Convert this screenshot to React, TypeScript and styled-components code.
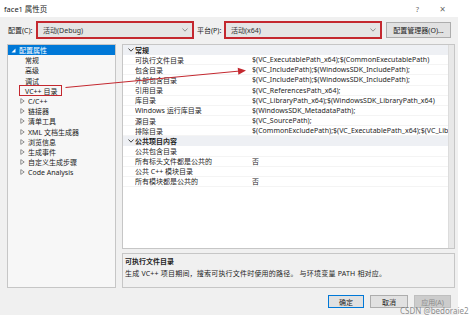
import React from "react";
import styled, { createGlobalStyle } from "styled-components";

const Global = createGlobalStyle`
  html, body { margin: 0; padding: 0; background: #ffffff; }
  body {
    font-family: "Noto Sans", "Noto Sans CJK SC", sans-serif;
    font-size: 7px;
    color: #1e1e1e;
  }
  * { box-sizing: border-box; }
`;

const Page = styled.div`
  position: relative;
  width: 474px;
  height: 318px;
`;

const Window = styled.div`
  width: 458px;
  height: 315px;
  background: #f0f0f0;
  display: flex;
  flex-direction: column;
`;

const TitleBar = styled.div`
  height: 17px;
  background: #ffffff;
  display: flex;
  align-items: center;
  padding: 0 3px 0 4px;
  font-size: 7.5px;
  color: #222;
`;

const Title = styled.div`
  flex: 1;
`;

const TitleButton = styled.div<{ $big?: boolean }>`
  width: 25px;
  text-align: center;
  color: #6a6a6a;
  font-size: ${(p) => (p.$big ? "10px" : "7.5px")};
`;

const ConfigRow = styled.div`
  height: 26px;
  display: flex;
  align-items: center;
  padding-left: 8px;
`;

const FieldLabel = styled.span<{ $w: number; $ml?: number }>`
  width: ${(p) => p.$w}px;
  margin-left: ${(p) => p.$ml ?? 0}px;
  color: #222;
`;

const Select = styled.div`
  width: 158px;
  height: 18px;
  border: 2px solid #c4282f;
  background: #e5e5e5;
  display: flex;
  align-items: center;
  justify-content: space-between;
  padding: 0 4px 0 5px;
  color: #333;
`;

const Spacer = styled.span<{ $w: number }>`
  width: ${(p) => p.$w}px;
  flex: none;
`;

const Button = styled.div<{ $w: number; $variant?: "default" | "primary" | "disabled" }>`
  width: ${(p) => p.$w}px;
  height: ${(p) => (p.$variant ? 13 : 16)}px;
  border: 1px solid
    ${(p) =>
      p.$variant === "primary" ? "#0078d7" : p.$variant === "disabled" ? "#bfbfbf" : "#adadad"};
  background: ${(p) => (p.$variant === "disabled" ? "#cccccc" : "#e1e1e1")};
  color: ${(p) => (p.$variant === "disabled" ? "#8a8a8a" : "#222")};
  display: flex;
  align-items: center;
  justify-content: center;
  white-space: nowrap;
`;

const Main = styled.div`
  height: 245px;
  display: flex;
  gap: 6px;
  padding: 1px 3px 0 7px;
`;

const Tree = styled.div`
  width: 109px;
  height: 244px;
  border: 1px solid #c6c6c6;
  background: #f7f7f7;
  display: flex;
  flex-direction: column;
`;

const TreeRow = styled.div<{ $level: number; $selected?: boolean }>`
  height: 10.2px;
  flex: none;
  display: flex;
  align-items: center;
  padding-left: ${(p) => (p.$level === 0 ? 3 : p.$level === 1 ? 17 : 12)}px;
  background: ${(p) => (p.$selected ? "#0078d7" : "transparent")};
  color: ${(p) => (p.$selected ? "#ffffff" : "#222")};
  white-space: nowrap;
`;

const Expander = styled.span`
  width: 6px;
  display: inline-flex;
  align-items: center;
  margin-right: 2px;
`;

const TreeLabel = styled.span<{ $marked?: boolean }>`
  ${(p) =>
    p.$marked
      ? `border: 1.5px solid #c4282f; padding: 0 4px 0 5px; margin-left: -6px; height: 11px; display: inline-flex; align-items: center;`
      : ""}
`;

const Right = styled.div`
  width: 333px;
  display: flex;
  flex-direction: column;
  gap: 4px;
`;

const Grid = styled.div`
  height: 205px;
  border: 1px solid #c6c6c6;
  background: #ffffff;
  display: flex;
`;

const GridBody = styled.div`
  flex: 1;
  overflow: hidden;
  display: flex;
  flex-direction: column;
`;

const Scrollbar = styled.div`
  width: 6px;
  background: #e8e8e8;
  border-left: 1px solid #dcdcdc;
`;

const PropRow = styled.div<{ $header?: boolean }>`
  height: 10.15px;
  flex: none;
  display: grid;
  grid-template-columns: 12px 117px 1fr;
  align-items: center;
  background: ${(p) => (p.$header ? "#eef0f4" : "#ffffff")};
  border-bottom: 1px solid ${(p) => (p.$header ? "#eef0f4" : "#f4f4f4")};
  font-weight: ${(p) => (p.$header ? 700 : 400)};
  white-space: nowrap;
`;

const Cell = styled.span`
  overflow: hidden;
  white-space: nowrap;
`;

const ValueCell = styled(Cell)`
  letter-spacing: 0.02px;
`;

const Chevron = styled.span`
  display: flex;
  justify-content: center;
  padding-left: 4px;
`;

const Desc = styled.div`
  height: 35px;
  border: 1px solid #c6c6c6;
  background: #f0f0f0;
  padding: 3px 2px;
  display: flex;
  flex-direction: column;
  gap: 2px;
  line-height: 10px;
`;

const DescTitle = styled.div`
  font-weight: 700;
`;

const DescText = styled.div`
  letter-spacing: 0.2px;
`;

const BottomBar = styled.div`
  height: 27px;
  display: flex;
  justify-content: flex-end;
  align-items: center;
  gap: 6px;
  padding-right: 7px;
`;

const Overlay = styled.svg`
  position: absolute;
  left: 0;
  top: 0;
  pointer-events: none;
`;

const Watermark = styled.div`
  position: absolute;
  left: 400px;
  top: 305px;
  font-size: 8px;
  color: rgba(120, 120, 120, 0.85);
  white-space: nowrap;
`;

const Collapsed = () => (
  <svg width="5" height="6" viewBox="0 0 5 6">
    <path d="M0.8 0.6 L4.2 3 L0.8 5.4 Z" fill="none" stroke="#777" strokeWidth="0.8" />
  </svg>
);

const Expanded = () => (
  <svg width="5" height="5" viewBox="0 0 5 5">
    <path d="M4.5 0.5 L4.5 4.5 L0.5 4.5 Z" fill="#ffffff" />
  </svg>
);

const DownChevron = ({ color = "#555" }: { color?: string }) => (
  <svg width="6" height="4" viewBox="0 0 6 4">
    <path d="M0.5 0.5 L3 3.2 L5.5 0.5" fill="none" stroke={color} strokeWidth="0.9" />
  </svg>
);

const treeItems: { label: string; level: number; kind?: "expanded" | "collapsed"; selected?: boolean; marked?: boolean }[] = [
  { label: "配置属性", level: 0, kind: "expanded", selected: true },
  { label: "常规", level: 1 },
  { label: "高级", level: 1 },
  { label: "调试", level: 1 },
  { label: "VC++ 目录", level: 1, marked: true },
  { label: "C/C++", level: 2, kind: "collapsed" },
  { label: "链接器", level: 2, kind: "collapsed" },
  { label: "清单工具", level: 2, kind: "collapsed" },
  { label: "XML 文档生成器", level: 2, kind: "collapsed" },
  { label: "浏览信息", level: 2, kind: "collapsed" },
  { label: "生成事件", level: 2, kind: "collapsed" },
  { label: "自定义生成步骤", level: 2, kind: "collapsed" },
  { label: "Code Analysis", level: 2, kind: "collapsed" },
];

const props: { name: string; value?: string; header?: boolean }[] = [
  { name: "常规", header: true },
  { name: "可执行文件目录", value: "$(VC_ExecutablePath_x64);$(CommonExecutablePath)" },
  { name: "包含目录", value: "$(VC_IncludePath);$(WindowsSDK_IncludePath);" },
  { name: "外部包含目录", value: "$(VC_IncludePath);$(WindowsSDK_IncludePath);" },
  { name: "引用目录", value: "$(VC_ReferencesPath_x64);" },
  { name: "库目录", value: "$(VC_LibraryPath_x64);$(WindowsSDK_LibraryPath_x64)" },
  { name: "Windows 运行库目录", value: "$(WindowsSDK_MetadataPath);" },
  { name: "源目录", value: "$(VC_SourcePath);" },
  { name: "排除目录", value: "$(CommonExcludePath);$(VC_ExecutablePath_x64);$(VC_Lib" },
  { name: "公共项目内容", header: true },
  { name: "公共包含目录", value: "" },
  { name: "所有标头文件都是公共的", value: "否" },
  { name: "公共 C++ 模块目录", value: "" },
  { name: "所有模块都是公共的", value: "否" },
];

export default function App() {
  return (
    <Page>
      <Global />
      <Window>
        <TitleBar>
          <Title>face1 属性页</Title>
          <TitleButton>?</TitleButton>
          <TitleButton $big>×</TitleButton>
        </TitleBar>

        <ConfigRow>
          <FieldLabel $w={28}>配置(C):</FieldLabel>
          <Select>
            <span>活动(Debug)</span>
            <DownChevron color="#888" />
          </Select>
          <FieldLabel $w={27} $ml={3}>平台(P):</FieldLabel>
          <Select>
            <span>活动(x64)</span>
            <DownChevron color="#888" />
          </Select>
          <Spacer $w={4} />
          <Button $w={65}>配置管理器(O)...</Button>
        </ConfigRow>

        <Main>
          <Tree>
            {treeItems.map((t) => (
              <TreeRow key={t.label} $level={t.level} $selected={t.selected}>
                {t.kind && <Expander>{t.kind === "expanded" ? <Expanded /> : <Collapsed />}</Expander>}
                <TreeLabel $marked={t.marked}>{t.label}</TreeLabel>
              </TreeRow>
            ))}
          </Tree>

          <Right>
            <Grid>
              <GridBody>
                {props.map((p) => (
                  <PropRow key={p.name} $header={p.header}>
                    <Chevron>{p.header ? <DownChevron color="#333" /> : null}</Chevron>
                    <Cell>{p.name}</Cell>
                    <ValueCell>{p.value ?? ""}</ValueCell>
                  </PropRow>
                ))}
              </GridBody>
              <Scrollbar />
            </Grid>
            <Desc>
              <DescTitle>可执行文件目录</DescTitle>
              <DescText>生成 VC++ 项目期间，搜索可执行文件时使用的路径。 与环境变量 PATH 相对应。</DescText>
            </Desc>
          </Right>
        </Main>

        <BottomBar>
          <Button $w={36} $variant="primary">确定</Button>
          <Button $w={38} $variant="default">取消</Button>
          <Button $w={37} $variant="disabled">应用(A)</Button>
        </BottomBar>
      </Window>

      <Overlay width="458" height="315" viewBox="0 0 458 315">
        <line x1="65.5" y1="87.5" x2="239" y2="71.1" stroke="#c4282f" strokeWidth="1" />
        <polygon points="246,70.5 238.4,74.7 237.7,67.8" fill="#c4282f" />
      </Overlay>
      <Watermark>CSDN @bedoraie2</Watermark>
    </Page>
  );
}
